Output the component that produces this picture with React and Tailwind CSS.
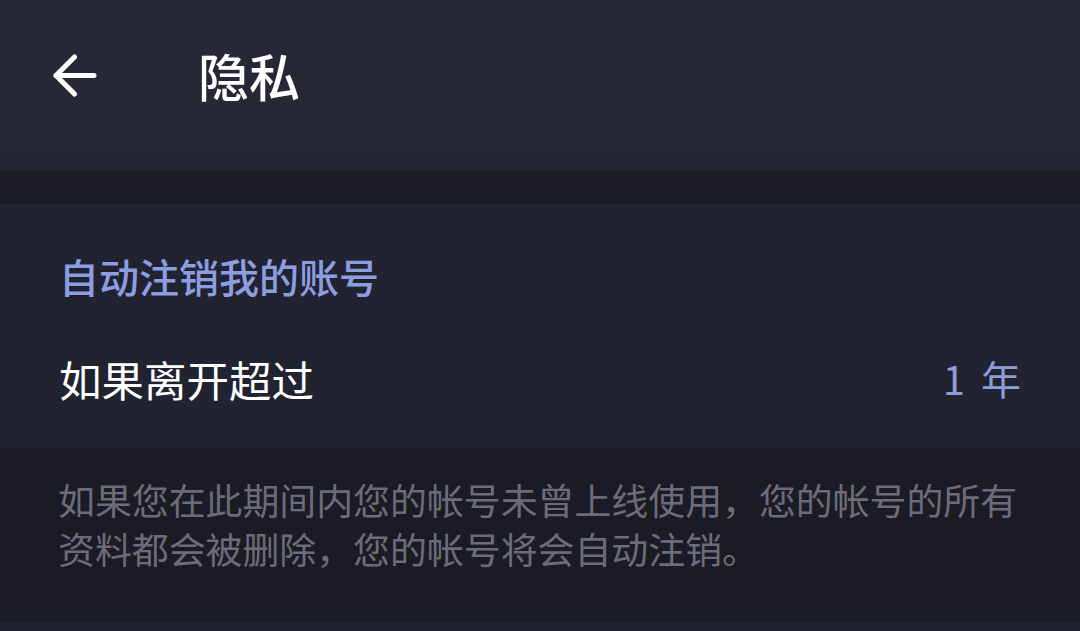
export default function App() {
  const font = { fontFamily: '"Noto Sans CJK SC", "Noto Sans", sans-serif' };
  return (
    <div className="w-[1080px] h-[631px] overflow-hidden bg-[#222331] flex flex-col" style={font}>
      <div className="h-[152px] bg-[#272836] flex items-center shrink-0">
        <div className="w-[198px] pl-[52px] flex items-center">
          <svg width="46" height="44" viewBox="0 0 46 44" fill="none" stroke="white" strokeWidth="5" strokeLinecap="round" strokeLinejoin="round">
            <path d="M4 21.5H42" />
            <path d="M22.5 3L4 21.5L22.5 40" />
          </svg>
        </div>
        <div className="text-white text-[51px] leading-none font-medium -mt-[2px]">隐私</div>
      </div>
      <div className="h-[19px] bg-[#232533] shrink-0" />
      <div className="h-[33px] bg-[#1c1c26] shrink-0" />
      <div className="bg-[#222331] shrink-0 px-[59px]">
        <div className="h-[146px] flex items-end pb-[54px]">
          <span className="text-[40px] leading-none text-[#8c9ee0] font-medium">自动注销我的账号</span>
        </div>
        <div className="h-[98px] flex items-start justify-between pt-[8px]">
          <span className="text-[42.5px] leading-none text-white">如果离开超过</span>
          <span className="text-[40px] leading-none text-[#8c9dd8] flex gap-[16px]">
            <span>1</span>
            <span>年</span>
          </span>
        </div>
      </div>
      <div className="h-[174px] bg-[#1b1b25] shrink-0 px-[58px] pt-[27px]">
        <p className="text-[36.9px] leading-[49px] text-[#6b6c78]">
          如果您在此期间内您的帐号未曾上线使用，您的帐号的所有<br />资料都会被删除，您的帐号将会自动注销。
        </p>
      </div>
      <div className="flex-1 bg-[#222331]" />
    </div>
  );
}
